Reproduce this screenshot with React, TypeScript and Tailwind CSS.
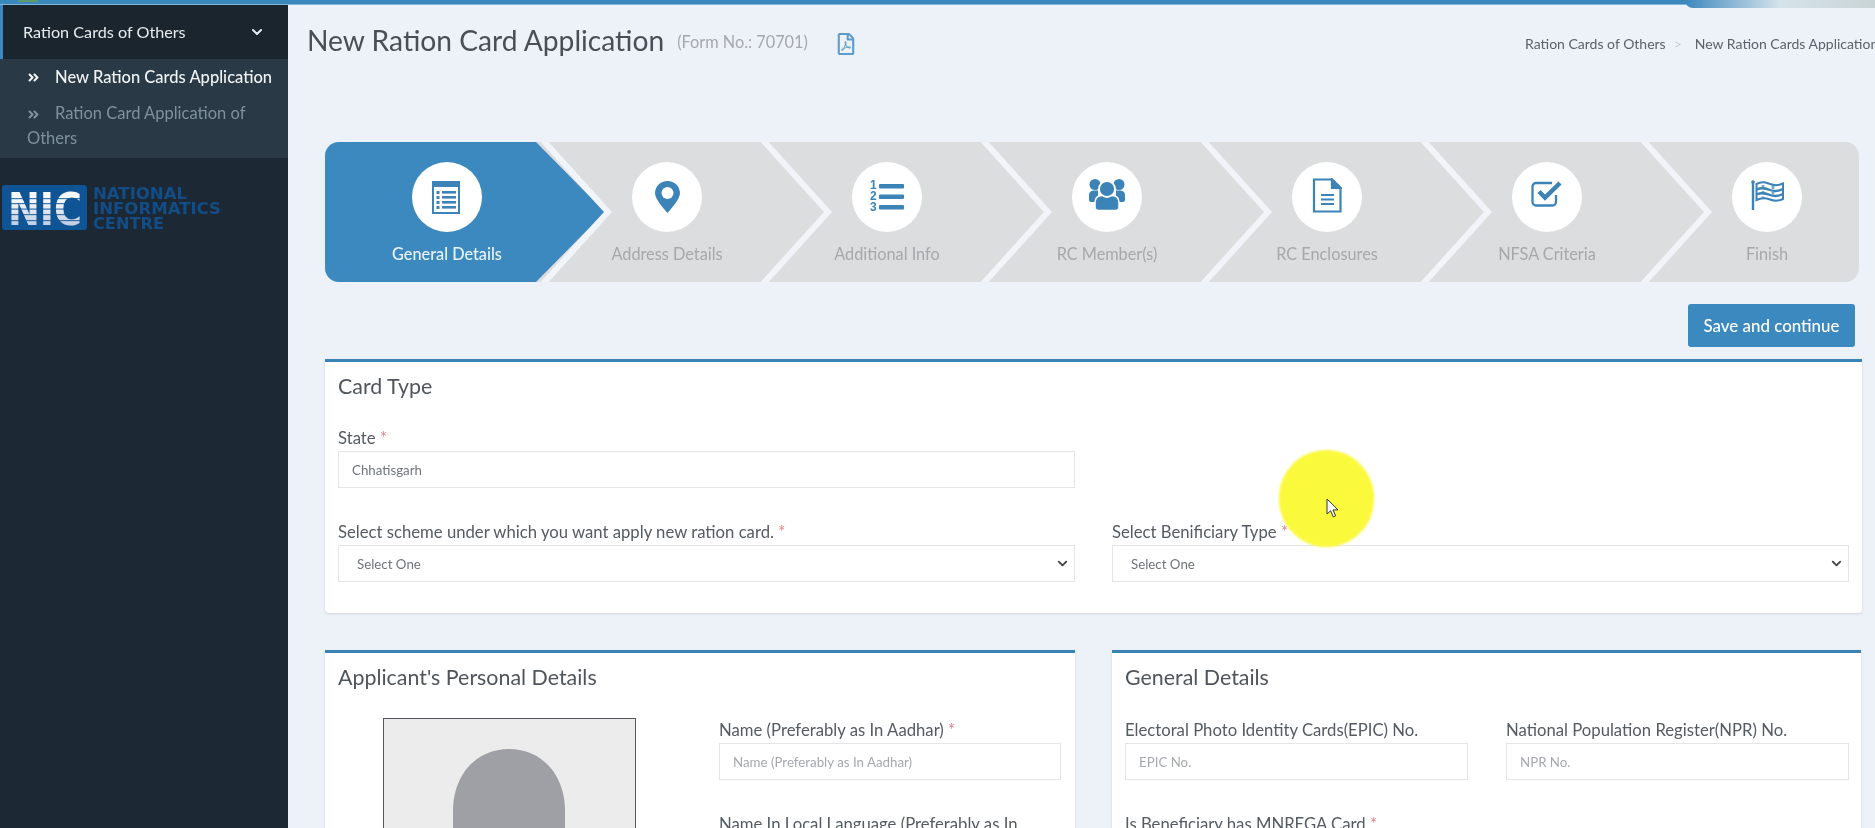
import React from 'react';
import { ChevronDown } from 'lucide-react';
import { FaAngleDoubleRight, FaRegFilePdf } from 'react-icons/fa';

const ListAltIcon = () => (
  <svg width="28" height="33" viewBox="0 0 28 33" fill="currentColor" className="-ml-[2px]">
    <rect x="1" y="1" width="26" height="31" fill="none" stroke="currentColor" strokeWidth="2" />
    <rect x="1" y="1" width="26" height="5" />
    {[10, 15, 20, 25].map((y) => (
      <g key={y}>
        <rect x="4.5" y={y} width="3" height="3" />
        <rect x="10" y={y} width="14" height="2.6" />
      </g>
    ))}
  </svg>
);

const PinIcon = () => (
  <svg width="25" height="32" viewBox="0 0 25 32" className="ml-[1px]">
    <path d="M12.5 0C5.6 0 0 5.4 0 12.2 0 18 9 28 12.5 32 16 28 25 18 25 12.2 25 5.4 19.4 0 12.5 0Z" fill="currentColor" />
    <circle cx="12.5" cy="12" r="6" fill="#fff" />
  </svg>
);

const NumberedIcon = () => (
  <svg width="34" height="33" viewBox="0 0 34 33" fill="currentColor" className="-mt-[3px]">
    <g fontFamily="Liberation Sans" fontSize="12" fontWeight="700">
      <text x="0" y="10">1</text>
      <text x="0" y="21">2</text>
      <text x="0" y="32">3</text>
    </g>
    <rect x="9" y="5" width="25" height="4.5" rx="1" />
    <rect x="9" y="15.5" width="25" height="4.5" rx="1" />
    <rect x="9" y="26" width="25" height="4.5" rx="1" />
  </svg>
);

const UsersIcon = () => (
  <svg width="38" height="33" viewBox="0 0 38 33" fill="currentColor" className="-mt-[6px]">
    <circle cx="7" cy="6.5" r="5.5" />
    <circle cx="31" cy="6.5" r="5.5" />
    <path d="M1 17c0-3 2-4.500 5-4.500h4V24H3c-1.500 0-2-1-2-2.500zM37 17c0-3-2-4.500-5-4.500h-4V24h7c1.500 0 2-1 2-2.500z" />
    <circle cx="19" cy="11" r="8" stroke="#fff" strokeWidth="1.800" />
    <path d="M7 25c0-5 3-7.500 7-7.500 3 2 7 2 10 0 4 0 7 2.500 7 7.500v4c0 2.200-1.500 3.500-3.500 3.500h-17C8.500 32.500 7 31.200 7 29z" stroke="#fff" strokeWidth="1.500" />
  </svg>
);

const FileIcon = () => (
  <svg width="30" height="35" viewBox="0 0 30 35" fill="none" stroke="currentColor" strokeWidth="2.200" className="-mt-[4px]">
    <path d="M2 1.500H20L28.500 10V33.500H2Z" />
    <path d="M20 1.500V10H28.500Z" fill="currentColor" />
    <path d="M9 17H22M9 21.500H22M9 26H22" />
  </svg>
);

const CheckIcon = () => (
  <svg width="32" height="27" viewBox="0 0 32 27" fill="none" stroke="currentColor" className="-mt-[7px]">
    <path d="M25 15v7a3.500 3.500 0 0 1-3.500 3.500H5A3.500 3.500 0 0 1 1.500 22V6.500A3.500 3.500 0 0 1 5 3h16" strokeWidth="2.300" />
    <path d="M8 11.500L14 17.500 29 3" strokeWidth="4.500" />
  </svg>
);

const FlagIcon = () => (
  <svg width="33" height="30" viewBox="0 0 33 30" fill="none" stroke="currentColor" className="-mt-[4px]">
    <path d="M2 1.500V30" strokeWidth="2.400" />
    <circle cx="2" cy="2" r="1.800" fill="currentColor" strokeWidth="0" />
    <path d="M5.500 4C11 1 15 2.500 19 4S27 6 32 3.500V19C27 21.500 23 21 19 19.500S11 17 5.500 20Z" strokeWidth="2" />
    <path d="M5.500 9.500C11 7 15 8.500 19 10S27 11.500 32 9" strokeWidth="2.400" />
    <path d="M5.500 14.500C11 12 15 13.500 19 15S27 16.500 32 14" strokeWidth="2.400" />
    <path d="M12 5V8M12 11V13.500M12 16.500V19M22 6V9M22 12V14.500" strokeWidth="2.800" opacity="0.7" />
  </svg>
);

const steps = [
  { label: 'General Details', icon: <ListAltIcon /> },
  { label: 'Address Details', icon: <PinIcon /> },
  { label: 'Additional Info', icon: <NumberedIcon /> },
  { label: 'RC Member(s)', icon: <UsersIcon /> },
  { label: 'RC Enclosures', icon: <FileIcon /> },
  { label: 'NFSA Criteria', icon: <CheckIcon /> },
  { label: 'Finish', icon: <FlagIcon /> },
];

const chevrons = [0, 1, 2, 3, 4, 5];

const Star = () => <span className="text-[#e57f86]"> *</span>;

const Label: React.FC<{ text: string; required?: boolean }> = ({ text, required }) => (
  <label className="block h-5 mb-[3px] text-[16.7px] leading-5 whitespace-nowrap text-[#555b62]">
    {text}
    {required && <Star />}
  </label>
);

const TextField: React.FC<{ label: string; placeholder?: string; value?: string; required?: boolean }> = ({
  label,
  placeholder,
  value,
  required,
}) => (
  <div>
    <Label text={label} required={required} />
    <input
      readOnly
      value={value}
      placeholder={placeholder}
      className="block w-full h-[37px] px-[13px] text-[13.300px] bg-white border border-[#e3e5e8] text-[#6f747a] placeholder:text-[#a5a8ad] outline-none"
    />
  </div>
);

const SelectField: React.FC<{ label: string }> = ({ label }) => (
  <div>
    <Label text={label} required />
    <div className="relative">
      <select className="block w-full h-[37px] pl-[18px] pr-8 pt-[2px] text-[13.300px] bg-white border border-[#e3e5e8] text-[#6f747a] appearance-none outline-none">
        <option>Select One</option>
      </select>
      <ChevronDown size={15} strokeWidth={3} className="absolute right-[5px] top-[11px] text-[#444]" />
    </div>
  </div>
);

const Card: React.FC<{ title: string; className?: string; children: React.ReactNode }> = ({
  title,
  className,
  children,
}) => (
  <section className={`bg-white border-t-[3px] border-[#3c83b5] rounded-b shadow-sm px-[13px] pt-3 ${className ?? ''}`}>
    <h3 className="h-6 text-[21.400px] leading-6 whitespace-nowrap text-[#4f555b]">{title}</h3>
    {children}
  </section>
);

const NicLogo = () => (
  <svg width="225" height="48" viewBox="0 0 225 48" className="block">
    <defs>
      <linearGradient id="nicFill" x1="0" y1="0" x2="0" y2="1">
        <stop offset="0.35" stopColor="#f6f7fb" />
        <stop offset="1" stopColor="#a9bad6" />
      </linearGradient>
    </defs>
    <rect x="2" y="1" width="85" height="45" rx="3" fill="#0f5596" />
    <text
      x="8"
      y="41"
      fontFamily="DejaVu Sans"
      fontWeight="700"
      fontSize="45"
      textLength="74"
      lengthAdjust="spacingAndGlyphs"
      fill="url(#nicFill)"
    >
      NIC
    </text>
    {[14, 19, 24.5, 30, 36].map((y) => (
      <rect key={y} x="6" y={y} width="78" height="1.200" fill="#0f5596" opacity="0.8" />
    ))}
    <g fontFamily="DejaVu Sans" fontWeight="700" fontSize="16.500" fill="#134d87" lengthAdjust="spacingAndGlyphs">
      <text x="93" y="15" textLength="94" lengthAdjust="spacingAndGlyphs">NATIONAL</text>
      <text x="93" y="30" textLength="128" lengthAdjust="spacingAndGlyphs">INFORMATICS</text>
      <text x="93" y="45" textLength="71" lengthAdjust="spacingAndGlyphs">CENTRE</text>
    </g>
  </svg>
);

const Sidebar = () => (
  <aside className="w-[288px] shrink-0 bg-[#1c2833] flex flex-col">
    <div className="h-[54px] flex items-center justify-between pl-[23px] pr-[23px] bg-[#1a252d] border-l-[3px] border-[#3c89bf] text-[16.200px] text-[#e8ecee]">
      <span className="-ml-[3px]">Ration Cards of Others</span>
      <ChevronDown size={16} strokeWidth={3} />
    </div>
    <div className="h-[99px] bg-[#293945] pl-[27px] pr-3 text-[16.500px]">
      <div className="h-9 flex items-center font-medium whitespace-nowrap text-[#f1f4f5]">
        <FaAngleDoubleRight size={13} className="mr-[15px]" />
        New Ration Cards Application
      </div>
      <div className="leading-[25px] text-[#7f919c] mt-[6px]">
        <FaAngleDoubleRight size={13} className="inline mr-[15px]" />
        Ration Card Application of Others
      </div>
    </div>
    <div className="mt-[26px]">
      <NicLogo />
    </div>
  </aside>
);

const Stepper = () => (
  <div className="relative h-[140px] ml-[37px] w-[1534px] rounded-[14px] overflow-hidden bg-[#dcddde] pl-3 flex">
    <svg width="1534" height="140" viewBox="0 0 1534 140" className="absolute left-0 top-0">
      <polygon points="0,0 211,0 280,70 211,140 0,140" fill="#3c89bf" />
      {chevrons.map((k) => (
        <polyline
          key={k}
          points={`${216 + 220 * k},-4 ${283 + 220 * k},70 ${216 + 220 * k},144`}
          fill="none"
          stroke="#f1f4f9"
          strokeWidth="6"
        />
      ))}
    </svg>
    {steps.map(({ label, icon }, i) => (
      <div key={label} className="relative w-[220px] shrink-0 flex flex-col items-center pt-[20px]">
        <div className="w-[70px] h-[70px] rounded-full bg-white flex items-center justify-center text-[#3c83b8]">
          {icon}
        </div>
        <span className={`mt-[10px] text-[16.300px] leading-6 ${i === 0 ? 'font-medium text-[#eaf3f9]' : 'text-[#a6a8aa]'}`}>
          {label}
        </span>
      </div>
    ))}
  </div>
);

export default function App() {
  return (
    <div className="relative h-[828px] overflow-hidden bg-[#edf1f8] font-['Lato',sans-serif] blur-[0.4px]">
      <div className="h-[5px] bg-[#3b88bd] border-b border-[#7fb6da]" />
      <div className="absolute top-0 left-[18px] h-[2px] w-5 bg-[#5d9a6e]" />
      <div className="absolute top-0 right-0 h-2 w-[190px] rounded-bl-full bg-gradient-to-r from-[#3b88bd] via-[#d5e3ea] to-[#c9d4d6]" />
      <div className="flex h-[823px]">
        <Sidebar />
        <main className="flex-1 min-w-0 overflow-hidden">
          <div className="h-[70px] flex items-center pl-[19px]">
            <h1 className="text-[28.200px] text-[#4a4f55] whitespace-nowrap">New Ration Card Application</h1>
            <span className="ml-[13px] mt-[5px] text-[16.300px] text-[#a5a8ad] whitespace-nowrap">(Form No.: 70701)</span>
            <FaRegFilePdf size={22} className="ml-[27px] mt-[7px] text-[#5b9ccb]" />
            <div className="ml-auto flex items-center mt-[6px] text-[14px] text-[#5d6268] whitespace-nowrap w-[350px] shrink-0">
              <span>Ration Cards of Others</span>
              <span className="mx-[8px] text-[#c9ccd0]">&gt;</span>
              <span className="ml-[5px]">New Ration Cards Application</span>
            </div>
          </div>

          <div className="mt-[67px]">
            <Stepper />
          </div>

          <div className="flex justify-end mt-[22px] pr-[20px]">
            <button className="h-[43px] w-[167px] rounded-[3px] bg-[#3c89bf] text-white text-[16.900px] font-medium">
              Save and continue
            </button>
          </div>

          <div className="ml-[37px] w-[1537px] mt-3">
            <Card title="Card Type" className="h-[254px]">
              <div className="grid grid-cols-2 gap-x-[37px] gap-y-[34px] mt-[30px]">
                <TextField label="State" value="Chhatisgarh" required />
                <div />
                <SelectField label="Select scheme under which you want apply new ration card." />
                <SelectField label="Select Benificiary Type" />
              </div>
            </Card>

            <div className="grid grid-cols-[750px_749px] gap-x-[37px] mt-[37px]">
              <Card title="Applicant's Personal Details" className="h-[400px]">
                <div className="flex mt-[29px]">
                  <div className="ml-[45px] w-[253px] h-[300px] shrink-0 border border-[#55585c] bg-[#ececec] overflow-hidden">
                    <svg width="251" height="298" viewBox="0 0 251 298">
                      <path d="M69 92C69 55 93 30 125 30S181 55 181 92V230H69Z" fill="#9ea0a5" />
                    </svg>
                  </div>
                  <div className="ml-[83px] w-[342px] pt-[2px] shrink-0">
                    <TextField label="Name (Preferably as In Aadhar)" placeholder="Name (Preferably as In Aadhar)" required />
                    <div className="mt-[34px] text-[16.700px] leading-5 text-[#555b62]">
                      Name In Local Language (Preferably as In Aadhar)
                    </div>
                  </div>
                </div>
              </Card>

              <Card title="General Details" className="h-[400px]">
                <div className="grid grid-cols-2 gap-x-[38px] gap-y-[34px] mt-[31px] w-[724px]">
                  <TextField label="Electoral Photo Identity Cards(EPIC) No." placeholder="EPIC No." />
                  <TextField label="National Population Register(NPR) No." placeholder="NPR No." />
                  <Label text="Is Beneficiary has MNREGA Card" required />
                </div>
              </Card>
            </div>
          </div>
        </main>
      </div>

      {/* cursor highlight from the screen recording */}
      <div className="absolute left-[1279px] top-[450px] w-[95px] h-[97px] rounded-full bg-[#fbf93c] blur-[1px]" />
      <svg width="14" height="21" viewBox="0 0 14 21" className="absolute left-[1326px] top-[498px]">
        <path d="M1 1v15l3.600-3.200 2.600 6 2.400-1-2.600-5.900H12z" fill="#fff" stroke="#333" strokeWidth="1" />
      </svg>
    </div>
  );
}
